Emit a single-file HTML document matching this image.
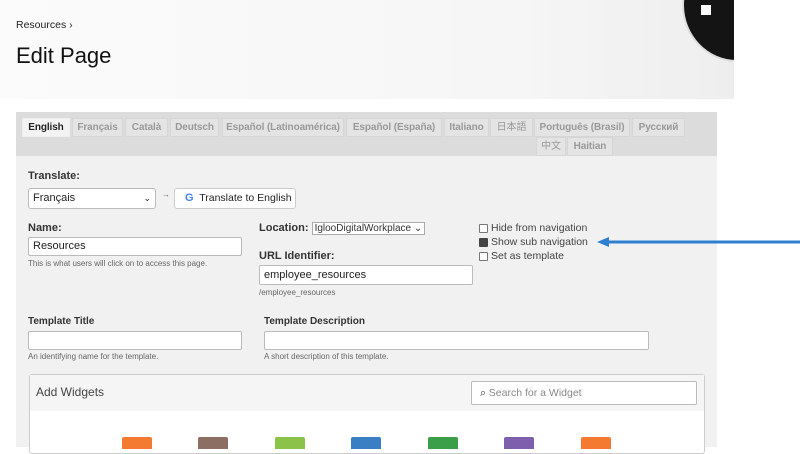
<!DOCTYPE html>
<html><head><meta charset="utf-8"><style>
*{box-sizing:border-box;margin:0;padding:0}
body{width:800px;height:447px;overflow:hidden;background:#fff;font-family:"Liberation Sans","Noto Sans CJK SC",sans-serif;position:relative;color:#222}
.a{position:absolute;white-space:nowrap}
.banner{left:0;top:0;width:734px;height:99px;background:linear-gradient(90deg,#fbfbfb,#f6f6f6 70%,#eee)}
.tab{position:absolute;height:19px;background:#e4e4e4;color:#999;font-size:10px;font-weight:bold;line-height:18px;text-align:center;border:1px solid #d6d6d6;white-space:nowrap;overflow:hidden;letter-spacing:-0.1px}
.lbl{position:absolute;font-size:11px;font-weight:bold;color:#333;white-space:nowrap}
.inp{position:absolute;background:#fff;border:1px solid #bbb;border-radius:2px;font-size:11px;line-height:17px;padding-left:4px;color:#222;white-space:nowrap;overflow:hidden}
.hint{position:absolute;font-size:8px;color:#666;white-space:nowrap}
.cb{position:absolute;width:9px;height:9px;border:1px solid #777;background:#fff;border-radius:1px}
.ct{position:absolute;font-size:10.5px;color:#444;white-space:nowrap}
.ic{position:absolute;top:437px;width:30px;height:12px;border-radius:2px 2px 0 0}
</style></head><body>
<div class="a banner"></div>
<div class="a" style="left:682px;top:-52px;width:110px;height:114px;background:#141414;border-radius:50%;border:2px solid #ddd"></div>
<div class="a" style="left:734px;top:0;width:66px;height:99px;background:#fff"></div>
<div class="a" style="left:701px;top:5px;width:10px;height:10px;background:#fff"></div>
<div class="a" style="left:16px;top:19px;font-size:10.5px;color:#222">Resources ›</div>
<div class="a" style="left:16px;top:43px;font-size:22px;color:#111">Edit Page</div>

<div class="a" style="left:16px;top:112px;width:701px;height:335px;background:#f1f1f1"></div>
<div class="a" style="left:16px;top:112px;width:701px;height:44px;background:#dcdcdc"></div>
<div class="tab" style="left:22px;top:118px;width:48px;background:#f3f3f3;color:#222;border-color:#eee">English</div>
<div class="tab" style="left:72px;top:118px;width:51px">Français</div>
<div class="tab" style="left:125px;top:118px;width:43px">Català</div>
<div class="tab" style="left:170px;top:118px;width:49px">Deutsch</div>
<div class="tab" style="left:222px;top:118px;width:122px">Español (Latinoamérica)</div>
<div class="tab" style="left:346px;top:118px;width:96px">Español (España)</div>
<div class="tab" style="left:444px;top:118px;width:45px">Italiano</div>
<div class="tab" style="left:490px;top:118px;width:43px;font-weight:normal">日本語</div>
<div class="tab" style="left:534px;top:118px;width:96px">Português (Brasil)</div>
<div class="tab" style="left:632px;top:118px;width:53px">Русский</div>
<div class="tab" style="left:536px;top:137px;width:30px;font-weight:normal">中文</div>
<div class="tab" style="left:567px;top:137px;width:46px">Haitian</div>

<div class="lbl" style="left:28px;top:170px">Translate:</div>
<div class="inp" style="left:28px;top:188px;width:128px;height:21px;line-height:19px;border-radius:3px">Français<span style="position:absolute;right:4px;font-size:9px">⌄</span></div>
<div class="a" style="left:162px;top:190px;font-size:8px;color:#666">→</div>
<div class="inp" style="left:174px;top:188px;width:122px;height:21px;line-height:19px;border-color:#ccc;padding-left:10px;border-radius:3px;font-size:10.5px"><b style="color:#4285f4;font-size:11px">G</b>&nbsp; Translate to English</div>

<div class="lbl" style="left:28px;top:222px">Name:</div>
<div class="inp" style="left:28px;top:237px;width:214px;height:19px">Resources</div>
<div class="hint" style="left:28px;top:259px">This is what users will click on to access this page.</div>

<div class="lbl" style="left:259px;top:222px">Location: <span style="font-weight:normal;font-size:10px;background:#fff;border:1px solid #aaa;padding:0 2px">IglooDigitalWorkplace ⌄</span></div>
<div class="lbl" style="left:259px;top:250px">URL Identifier:</div>
<div class="inp" style="left:259px;top:265px;width:214px;height:20px;line-height:18px">employee_resources</div>
<div class="hint" style="left:259px;top:288px">/employee_resources</div>

<div class="cb" style="left:479px;top:224px"></div><div class="ct" style="left:491px;top:222px">Hide from navigation</div>
<div class="cb" style="left:479px;top:238px;background:#444;border-color:#444"></div><div class="ct" style="left:491px;top:236px">Show sub navigation</div>
<div class="cb" style="left:479px;top:252px"></div><div class="ct" style="left:491px;top:250px">Set as template</div>
<svg class="a" style="left:595px;top:236px" width="205" height="12"><path d="M12 6H205" stroke="#2f7fd1" stroke-width="3"/><path d="M2 6L14 1V11Z" fill="#2f7fd1"/></svg>

<div class="lbl" style="left:28px;top:316px;font-size:10px">Template Title</div>
<div class="inp" style="left:28px;top:331px;width:214px;height:19px"></div>
<div class="hint" style="left:28px;top:352px">An identifying name for the template.</div>
<div class="lbl" style="left:264px;top:316px;font-size:10px">Template Description</div>
<div class="inp" style="left:264px;top:331px;width:385px;height:19px"></div>
<div class="hint" style="left:264px;top:352px">A short description of this template.</div>

<div class="a" style="left:29px;top:374px;width:676px;height:80px;background:#fff;border:1px solid #ccc;border-radius:3px"></div>
<div class="a" style="left:30px;top:375px;width:674px;height:36px;background:#f5f5f5"></div>
<div class="a" style="left:36px;top:385px;font-size:12px;color:#444">Add Widgets</div>
<div class="inp" style="left:471px;top:381px;width:226px;height:24px;line-height:22px;padding-left:8px;color:#888;font-size:10.5px;border-color:#bbb"><span style="color:#333">&#x2315;</span> Search for a Widget</div>

<div class="ic" style="left:122px;background:#f47a32"></div>
<div class="ic" style="left:198px;background:#8d6e63"></div>
<div class="ic" style="left:275px;background:#8bc34a"></div>
<div class="ic" style="left:351px;background:#3a7fc4"></div>
<div class="ic" style="left:428px;background:#3a9f48"></div>
<div class="ic" style="left:504px;background:#7e5fae"></div>
<div class="ic" style="left:581px;background:#f47a32"></div>
</body></html>
